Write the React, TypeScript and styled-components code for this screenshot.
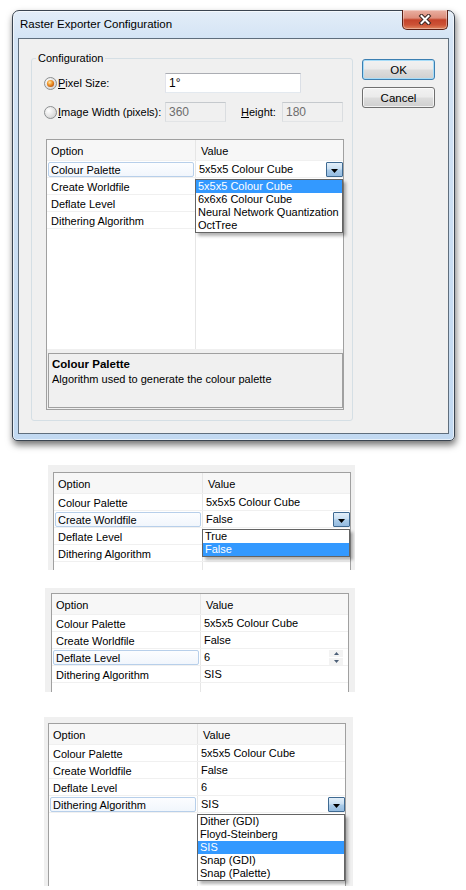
import React from "react";
import styled, { createGlobalStyle } from "styled-components";

const GlobalStyle = createGlobalStyle`
  html, body {
    margin: 0;
    padding: 0;
    background: #fff;
  }
  body {
    font-family: "Liberation Sans", Arial, sans-serif;
    font-size: 11px;
    color: #000;
  }
  * {
    box-sizing: border-box;
  }
`;

const OPTIONS = ["Colour Palette", "Create Worldfile", "Deflate Level", "Dithering Algorithm"];

const Page = styled.div`
  width: 466px;
  height: 890px;
  display: flex;
  flex-direction: column;
  align-items: flex-start;
  overflow: hidden;
`;

/* ---------- window chrome ---------- */

const Window = styled.div`
  margin: 10px 0 0 12px;
  width: 443px;
  height: 431px;
  display: flex;
  flex-direction: column;
  padding: 0 5px 6px 5px;
  border: 1px solid #3a4450;
  border-radius: 7px 7px 5px 5px;
  background: linear-gradient(180deg, #e3edf8 0%, #d4e4f5 27px, #c2d9f1 100%);
  box-shadow: inset 0 0 0 1px rgba(255, 255, 255, 0.6), 1px 4px 7px rgba(0, 0, 0, 0.55);
`;

const TitleBar = styled.div`
  height: 27px;
  flex-shrink: 0;
  display: flex;
  align-items: flex-start;
  justify-content: space-between;
  padding-left: 2px;
`;

const Title = styled.span`
  font-size: 11.5px;
  line-height: 27px;
  color: #000;
`;

const CloseButton = styled.div`
  width: 46px;
  height: 20px;
  margin: -1px 1px 0 0;
  border: 1px solid #5a2015;
  border-top: none;
  border-radius: 0 0 5px 5px;
  background: linear-gradient(180deg, #eab0a2 0%, #dd8d7b 42%, #c4432a 52%, #cc5236 78%, #e0865e 100%);
  box-shadow: inset 0 0 0 1px rgba(255, 255, 255, 0.35);
  display: flex;
  align-items: center;
  justify-content: center;
`;

const Client = styled.div`
  flex: 1;
  display: flex;
  align-items: flex-start;
  gap: 9px;
  padding: 19px 13px 0 12px;
  border: 1px solid #5f6e7d;
  background: #f0f0f0;
`;

/* ---------- group box ---------- */

const GroupBox = styled.div`
  width: 322px;
  height: 363px;
  flex-shrink: 0;
  display: flex;
  flex-direction: column;
  align-items: flex-start;
  padding-left: 12px;
  border: 1px solid #d5dfe5;
  border-radius: 3px;
`;

const GroupTitle = styled.div`
  margin: -7px 0 0 -8px;
  padding: 0 2px;
  line-height: 13px;
  background: #f0f0f0;
`;

const OptionRow = styled.div<{ $gap: number }>`
  display: flex;
  align-items: center;
  height: 20px;
  margin-top: ${(p) => p.$gap}px;
`;

const RadioLabel = styled.label`
  width: 108px;
  padding-left: 1px;
  cursor: default;
`;

const SideLabel = styled.label`
  width: 41px;
  margin-left: 15px;
`;

const TextBox = styled.div<{ $width: number; $disabled?: boolean }>`
  width: ${(p) => p.$width}px;
  height: 20px;
  display: flex;
  align-items: center;
  padding-left: 3px;
  font-size: 12px;
  border: 1px solid;
  border-color: ${(p) => (p.$disabled ? "#c5c9cd #dadde0 #e2e4e6 #dadde0" : "#abadb3 #dbdfe6 #e3e9ef #e2e3ea")};
  background: ${(p) => (p.$disabled ? "#f0f0f0" : "#fff")};
  color: ${(p) => (p.$disabled ? "#6d6d6d" : "#000")};
`;

const GridSlot = styled.div`
  margin: 17px 0 0 2px;
`;

/* ---------- buttons ---------- */

const ButtonColumn = styled.div`
  display: flex;
  flex-direction: column;
  gap: 7px;
  margin-top: 1px;
`;

const Button = styled.div<{ $default?: boolean }>`
  width: 73px;
  height: 21px;
  display: flex;
  align-items: center;
  justify-content: center;
  border: 1px solid ${(p) => (p.$default ? "#3c7fb1" : "#707070")};
  border-radius: 3px;
  background: linear-gradient(180deg, #f2f2f2 0%, #ebebeb 48%, #dddddd 52%, #cfcfcf 100%);
  box-shadow: inset 0 0 0 1px ${(p) => (p.$default ? "#a6dcf8" : "rgba(255,255,255,0.7)")};
  font-size: 11.5px;
`;

/* ---------- property grid ---------- */

const Grid = styled.div<{ $height?: number }>`
  width: 298px;
  height: ${(p) => (p.$height ? `${p.$height}px` : "auto")};
  flex-shrink: 0;
  display: flex;
  flex-direction: column;
  border: 1px solid #a0a0a0;
  background: #f0f0f0;
`;

const GridBody = styled.div<{ $height: number }>`
  height: ${(p) => p.$height}px;
  flex-shrink: 0;
  background: linear-gradient(to right, transparent 148px, #e6e6e6 148px, #e6e6e6 149px, transparent 149px), #fff;
`;

const HeaderRow = styled.div`
  display: flex;
  height: 21px;
  align-items: center;
  background: linear-gradient(to right, transparent 148px, #e6e6e6 148px, #e6e6e6 149px, transparent 149px), #f7f7f7;
  border-bottom: 1px solid #f0f0f0;
`;

const HeaderCell = styled.div<{ $first?: boolean }>`
  width: ${(p) => (p.$first ? "149px" : "auto")};
  padding-left: ${(p) => (p.$first ? 4 : 5)}px;
  padding-top: 2px;
`;

const Row = styled.div`
  display: flex;
  height: 17px;
  border-bottom: 1px solid #f0f0f0;
`;

const OptionCell = styled.div`
  width: 149px;
  flex-shrink: 0;
  padding: 1px 2px 0 1px;
`;

const OptionLabel = styled.div<{ $selected: boolean }>`
  height: 15px;
  display: flex;
  align-items: center;
  padding-left: 2px;
  border: 1px solid ${(p) => (p.$selected ? "#b7cfea" : "transparent")};
  border-radius: 2px;
  background: ${(p) => (p.$selected ? "linear-gradient(180deg, #fcfdff, #f1f6fc)" : "transparent")};
`;

const ValueCell = styled.div<{ $open?: boolean }>`
  flex: 1;
  display: flex;
  align-items: center;
  justify-content: space-between;
  padding-left: 3px;
  position: ${(p) => (p.$open ? "relative" : "static")};
`;

const DropButton = styled.div`
  width: 17px;
  height: 15px;
  display: flex;
  align-items: flex-end;
  justify-content: center;
  padding-bottom: 3px;
  border: 1px solid #3f6a92;
  border-radius: 1px;
  background: linear-gradient(180deg, #e3eff9 0%, #c9dff2 45%, #a9cbe9 55%, #94bbe0 100%);
`;

const Spinner = styled.div`
  width: 14px;
  margin-right: 5px;
  display: flex;
  flex-direction: column;
  gap: 1px;
`;

const SpinHalf = styled.div`
  height: 7px;
  display: flex;
  align-items: center;
  justify-content: center;
  background: #f3f3f3;
`;

const DropList = styled.div`
  position: absolute;
  z-index: 2;
  top: calc(100% + 2px);
  left: -1px;
  width: 148px;
  border: 1px solid #646464;
  background: #fff;
  box-shadow: 3px 3px 3px rgba(0, 0, 0, 0.3);
`;

const ListItem = styled.div<{ $active: boolean }>`
  height: 13px;
  line-height: 13px;
  padding-left: 2px;
  white-space: nowrap;
  background: ${(p) => (p.$active ? "#3399ff" : "transparent")};
  color: ${(p) => (p.$active ? "#fff" : "#000")};
`;

const Description = styled.div`
  height: 55px;
  margin: 4px 0 1px 1px;
  padding: 3px 0 0 3px;
  border: 1px solid #a0a0a0;
  line-height: 15px;
`;

const DescTitle = styled.div`
  font-weight: bold;
  font-size: 11.5px;
`;

/* ---------- cropped grid snippets ---------- */

const Snippet = styled.div<{ $top: number; $left: number; $pad: string; $height: number; $width: number }>`
  margin: ${(p) => p.$top}px 0 0 ${(p) => p.$left}px;
  width: ${(p) => p.$width}px;
  height: ${(p) => p.$height}px;
  padding: ${(p) => p.$pad};
  background: #f0f0f0;
  overflow: hidden;
`;

/* ---------- drawings ---------- */

const Radio = ({ checked, id }: { checked?: boolean; id: string }) => (
  <svg width="13" height="13" viewBox="0 0 13 13">
    <defs>
      <radialGradient id={`rb-${id}`} cx="0.35" cy="0.35" r="0.7">
        <stop offset="0" stopColor="#ffffff" />
        <stop offset="1" stopColor="#d4d4d4" />
      </radialGradient>
      <radialGradient id={`rd-${id}`} cx="0.4" cy="0.35" r="0.7">
        <stop offset="0" stopColor="#fde8a8" />
        <stop offset="0.5" stopColor="#f0952c" />
        <stop offset="1" stopColor="#b8520c" />
      </radialGradient>
    </defs>
    <circle cx="6.5" cy="6.5" r="6" fill={`url(#rb-${id})`} stroke="#8c8f91" />
    {checked && <circle cx="6.5" cy="6.5" r="3.6" fill={`url(#rd-${id})`} />}
  </svg>
);

const CloseGlyph = () => (
  <svg width="14" height="11" viewBox="0 0 14 11">
    <path d="M3.5 2 L10.5 9 M10.5 2 L3.5 9" stroke="#3a2622" strokeWidth="4" strokeLinecap="square" />
    <path d="M3.5 2 L10.5 9 M10.5 2 L3.5 9" stroke="#ffffff" strokeWidth="2" strokeLinecap="square" />
  </svg>
);

const DownArrow = () => (
  <svg width="7" height="4" viewBox="0 0 7 4">
    <path d="M0 0 H7 L3.5 4 Z" fill="#000" />
  </svg>
);

const SpinArrow = ({ up }: { up?: boolean }) => (
  <svg width="5" height="3" viewBox="0 0 5 3">
    <path d={up ? "M0 3 H5 L2.5 0 Z" : "M0 0 H5 L2.5 3 Z"} fill="#4d6078" />
  </svg>
);

/* ---------- property grid component ---------- */

type GridProps = {
  values: string[];
  selected: number;
  editor: "drop" | "spin";
  list?: string[];
  listActive?: number;
  covered?: number[];
  bodyHeight: number;
  height?: number;
  description?: boolean;
};

const PropertyGrid = ({ values, selected, editor, list, listActive, covered = [], bodyHeight, height, description }: GridProps) => (
  <Grid $height={height}>
    <GridBody $height={bodyHeight}>
      <HeaderRow>
        <HeaderCell $first>Option</HeaderCell>
        <HeaderCell>Value</HeaderCell>
      </HeaderRow>
      {OPTIONS.map((name, i) => {
        const isSel = i === selected;
        return (
          <Row key={name}>
            <OptionCell>
              <OptionLabel $selected={isSel}>{name}</OptionLabel>
            </OptionCell>
            <ValueCell $open={isSel && !!list}>
              {/* values hidden under an open list are not drawn */}
              <span>{covered.includes(i) ? "" : values[i]}</span>
              {isSel && editor === "drop" && (
                <DropButton>
                  <DownArrow />
                </DropButton>
              )}
              {isSel && editor === "spin" && (
                <Spinner>
                  <SpinHalf>
                    <SpinArrow up />
                  </SpinHalf>
                  <SpinHalf>
                    <SpinArrow />
                  </SpinHalf>
                </Spinner>
              )}
              {isSel && list && (
                <DropList>
                  {list.map((item, j) => (
                    <ListItem key={item} $active={j === listActive}>
                      {item}
                    </ListItem>
                  ))}
                </DropList>
              )}
            </ValueCell>
          </Row>
        );
      })}
    </GridBody>
    {description && (
      <Description>
        <DescTitle>Colour Palette</DescTitle>
        <div>Algorithm used to generate the colour palette</div>
      </Description>
    )}
  </Grid>
);

const VALUES = ["5x5x5 Colour Cube", "False", "6", "SIS"];

export default function App() {
  return (
    <Page>
      <GlobalStyle />
      <Window>
        <TitleBar>
          <Title>Raster Exporter Configuration</Title>
          <CloseButton>
            <CloseGlyph />
          </CloseButton>
        </TitleBar>
        <Client>
          <GroupBox>
            <GroupTitle>Configuration</GroupTitle>
            <OptionRow $gap={8}>
              <Radio checked id="px" />
              <RadioLabel>
                <u>P</u>ixel Size:
              </RadioLabel>
              <TextBox $width={136}>1°</TextBox>
            </OptionRow>
            <OptionRow $gap={9}>
              <Radio id="iw" />
              <RadioLabel>
                <u>I</u>mage Width (pixels):
              </RadioLabel>
              <TextBox $width={61} $disabled>
                360
              </TextBox>
              <SideLabel>
                <u>H</u>eight:
              </SideLabel>
              <TextBox $width={61} $disabled>
                180
              </TextBox>
            </OptionRow>
            <GridSlot>
              <PropertyGrid
                values={VALUES}
                selected={0}
                editor="drop"
                list={["5x5x5 Colour Cube", "6x6x6 Colour Cube", "Neural Network Quantization", "OctTree"]}
                listActive={0}
                covered={[1, 2, 3]}
                bodyHeight={209}
                height={271}
                description
              />
            </GridSlot>
          </GroupBox>
          <ButtonColumn>
            <Button $default>OK</Button>
            <Button>Cancel</Button>
          </ButtonColumn>
        </Client>
      </Window>

      <Snippet $top={24} $left={48} $width={307} $height={105} $pad="7px 4px 0 5px">
        <PropertyGrid
          values={VALUES}
          selected={1}
          editor="drop"
          list={["True", "False"]}
          listActive={1}
          covered={[2]}
          bodyHeight={200}
        />
      </Snippet>

      <Snippet $top={18} $left={45} $width={310} $height={104} $pad="5px 5px 0 6px">
        <PropertyGrid values={VALUES} selected={2} editor="spin" bodyHeight={200} />
      </Snippet>

      <Snippet $top={25} $left={44} $width={309} $height={169} $pad="6px 7px 0 4px">
        <PropertyGrid
          values={VALUES}
          selected={3}
          editor="drop"
          list={["Dither (GDI)", "Floyd-Steinberg", "SIS", "Snap (GDI)", "Snap (Palette)"]}
          listActive={2}
          bodyHeight={200}
        />
      </Snippet>
    </Page>
  );
}
